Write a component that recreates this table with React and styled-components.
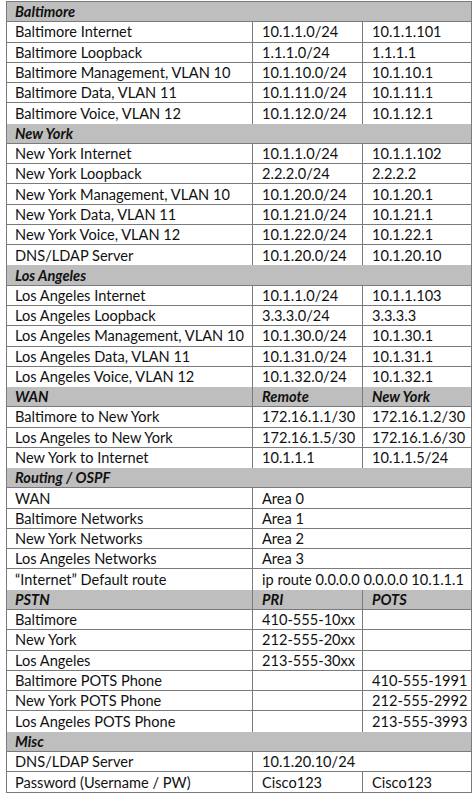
import styled, { createGlobalStyle } from "styled-components";

const GlobalStyle = createGlobalStyle`
  html, body {
    margin: 0;
    padding: 0;
    background: #ffffff;
  }
  body {
    font-family: Lato, "Open Sans", "Liberation Sans", sans-serif;
    color: #111;
  }
`;

const Page = styled.div`
  padding: 1px 0 0 6px;
`;

const Table = styled.div`
  width: 466px;
  border: 1px solid #7a7a7a;
  box-sizing: border-box;
`;

const Row = styled.div`
  display: grid;
  grid-template-columns: 245px 110px 1fr;
  height: 20.28px;
  box-sizing: border-box;
  border-bottom: 1px solid #7a7a7a;
  background: ${(p) => (p.$head ? "#bebebe" : "#ffffff")};
  font-weight: ${(p) => (p.$head ? 700 : 400)};
  font-style: ${(p) => (p.$head ? "italic" : "normal")};

  &:last-child {
    border-bottom: none;
  }
`;

const Cell = styled.div`
  grid-column: span ${(p) => p.$span || 1};
  display: flex;
  align-items: center;
  padding-left: ${(p) => (p.$first ? "8px" : "9px")};
  border-left: ${(p) => (p.$first ? "none" : "1px solid #7a7a7a")};
  font-size: 14.6px;
  white-space: nowrap;
  overflow: hidden;
`;

// each row: [label, col2, col3]; null in col3 means col2 spans both
const sections = [
  {
    title: ["Baltimore"],
    rows: [
      ["Baltimore Internet", "10.1.1.0/24", "10.1.1.101"],
      ["Baltimore Loopback", "1.1.1.0/24", "1.1.1.1"],
      ["Baltimore Management, VLAN 10", "10.1.10.0/24", "10.1.10.1"],
      ["Baltimore Data, VLAN 11", "10.1.11.0/24", "10.1.11.1"],
      ["Baltimore Voice, VLAN 12", "10.1.12.0/24", "10.1.12.1"],
    ],
  },
  {
    title: ["New York"],
    rows: [
      ["New York Internet", "10.1.1.0/24", "10.1.1.102"],
      ["New York Loopback", "2.2.2.0/24", "2.2.2.2"],
      ["New York Management, VLAN 10", "10.1.20.0/24", "10.1.20.1"],
      ["New York Data, VLAN 11", "10.1.21.0/24", "10.1.21.1"],
      ["New York Voice, VLAN 12", "10.1.22.0/24", "10.1.22.1"],
      ["DNS/LDAP Server", "10.1.20.0/24", "10.1.20.10"],
    ],
  },
  {
    title: ["Los Angeles"],
    rows: [
      ["Los Angeles Internet", "10.1.1.0/24", "10.1.1.103"],
      ["Los Angeles Loopback", "3.3.3.0/24", "3.3.3.3"],
      ["Los Angeles Management, VLAN 10", "10.1.30.0/24", "10.1.30.1"],
      ["Los Angeles Data, VLAN 11", "10.1.31.0/24", "10.1.31.1"],
      ["Los Angeles Voice, VLAN 12", "10.1.32.0/24", "10.1.32.1"],
    ],
  },
  {
    title: ["WAN", "Remote", "New York"],
    rows: [
      ["Baltimore to New York", "172.16.1.1/30", "172.16.1.2/30"],
      ["Los Angeles to New York", "172.16.1.5/30", "172.16.1.6/30"],
      ["New York to Internet", "10.1.1.1", "10.1.1.5/24"],
    ],
  },
  {
    title: ["Routing / OSPF"],
    rows: [
      ["WAN", "Area 0", null],
      ["Baltimore Networks", "Area 1", null],
      ["New York Networks", "Area 2", null],
      ["Los Angeles Networks", "Area 3", null],
      ["\u201cInternet\u201d Default route", "ip route 0.0.0.0 0.0.0.0 10.1.1.1", null],
    ],
  },
  {
    title: ["PSTN", "PRI", "POTS"],
    rows: [
      ["Baltimore", "410-555-10xx", ""],
      ["New York", "212-555-20xx", ""],
      ["Los Angeles", "213-555-30xx", ""],
      ["Baltimore POTS Phone", "", "410-555-1991"],
      ["New York POTS Phone", "", "212-555-2992"],
      ["Los Angeles POTS Phone", "", "213-555-3993"],
    ],
  },
  {
    title: ["Misc"],
    rows: [
      ["DNS/LDAP Server", "10.1.20.10/24", null],
      ["Password (Username / PW)", "Cisco123", "Cisco123"],
    ],
  },
];

const HeadRow = ({ title }) => (
  <Row $head>
    {title.length === 1 ? (
      <Cell $first $span={3}>{title[0]}</Cell>
    ) : (
      <>
        <Cell $first>{title[0]}</Cell>
        <Cell>{title[1]}</Cell>
        <Cell>{title[2]}</Cell>
      </>
    )}
  </Row>
);

const DataRow = ({ cells }) => (
  <Row>
    <Cell $first>{cells[0]}</Cell>
    {cells[2] === null ? (
      <Cell $span={2}>{cells[1]}</Cell>
    ) : (
      <>
        <Cell>{cells[1]}</Cell>
        <Cell>{cells[2]}</Cell>
      </>
    )}
  </Row>
);

export default function App() {
  return (
    <>
      <GlobalStyle />
      <Page>
        <Table>
          {sections.map((s) => (
            <div key={s.title[0]} style={{ display: "contents" }}>
              <HeadRow title={s.title} />
              {s.rows.map((r, i) => (
                <DataRow key={i} cells={r} />
              ))}
            </div>
          ))}
        </Table>
      </Page>
    </>
  );
}
